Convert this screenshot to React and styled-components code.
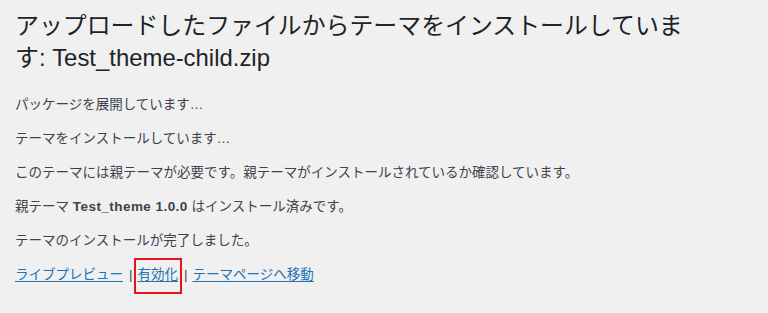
import React from "react";
import styled, { createGlobalStyle } from "styled-components";

const GlobalStyle = createGlobalStyle`
  html, body {
    margin: 0;
    padding: 0;
    background: #f0f0f1;
  }
  body {
    font-family: "Liberation Sans", "Noto Sans CJK JP", sans-serif;
    color: #3c434a;
  }
`;

const Wrap = styled.div`
  padding: 10px 70px 0 15px;
  width: 768px;
  height: 313px;
  box-sizing: border-box;
  overflow: hidden;
`;

const Title = styled.h1`
  margin: 0 0 22px;
  font-size: 23.9px;
  line-height: 31.5px;
  font-weight: 400;
  color: #1d2327;
`;

const Para = styled.p`
  margin: 13.6px 0;
  font-size: 13.5px;
  line-height: 20.4px;
  color: #3c434a;
`;

const Strong = styled.strong`
  font-weight: 700;
  color: #3c434a;
  letter-spacing: 0.45px;
`;

const Link = styled.a`
  color: #2271b1;
  text-decoration: underline;
  text-underline-offset: 2px;
`;

const Sep = styled.span`
  color: #3c434a;
  margin: 0 5px 0 6px;
`;

const Highlight = styled.span`
  position: relative;
  &::after {
    content: "";
    position: absolute;
    left: -4px;
    right: -4px;
    top: -9px;
    bottom: -12px;
    border: 2.5px solid #e8121a;
    pointer-events: none;
  }
`;

export default function App() {
  return (
    <>
      <GlobalStyle />
      <Wrap>
        <Title>アップロードしたファイルからテーマをインストールしています: Test_theme-child.zip</Title>
        <Para>パッケージを展開しています…</Para>
        <Para>テーマをインストールしています…</Para>
        <Para>このテーマには親テーマが必要です。親テーマがインストールされているか確認しています。</Para>
        <Para>
          親テーマ <Strong>Test_theme 1.0.0</Strong> はインストール済みです。
        </Para>
        <Para>テーマのインストールが完了しました。</Para>
        <Para>
          <Link href="#">ライブプレビュー</Link>
          <Sep>|</Sep>
          <Highlight>
            <Link href="#">有効化</Link>
          </Highlight>
          <Sep>|</Sep>
          <Link href="#">テーマページへ移動</Link>
        </Para>
      </Wrap>
    </>
  );
}
